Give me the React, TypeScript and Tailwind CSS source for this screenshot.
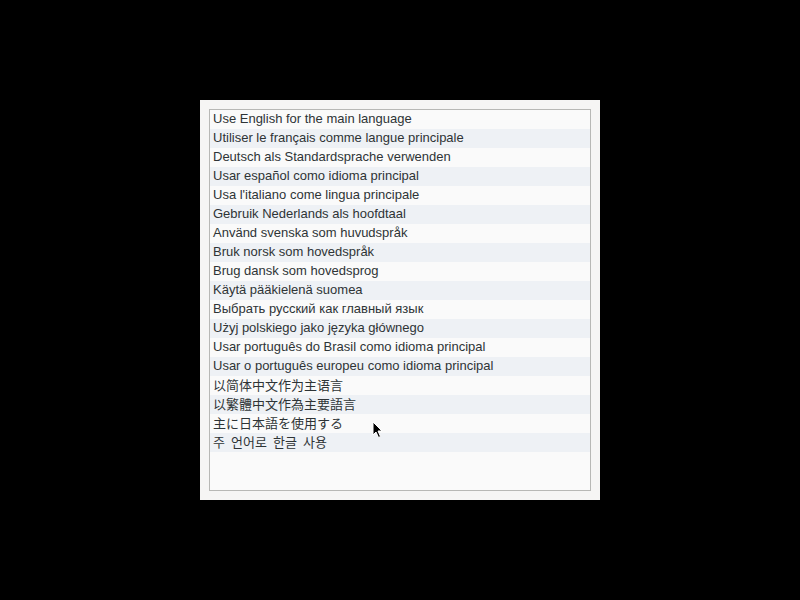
const ITEMS = [
  "Use English for the main language",
  "Utiliser le français comme langue principale",
  "Deutsch als Standardsprache verwenden",
  "Usar español como idioma principal",
  "Usa l'italiano come lingua principale",
  "Gebruik Nederlands als hoofdtaal",
  "Använd svenska som huvudspråk",
  "Bruk norsk som hovedspråk",
  "Brug dansk som hovedsprog",
  "Käytä pääkielenä suomea",
  "Выбрать русский как главный язык",
  "Użyj polskiego jako języka głównego",
  "Usar português do Brasil como idioma principal",
  "Usar o português europeu como idioma principal",
  "以简体中文作为主语言",
  "以繁體中文作為主要語言",
  "主に日本語を使用する",
  "주 언어로 한글 사용",
];

export default function App() {
  return (
    <div className="relative flex h-[600px] w-[800px] items-center justify-center bg-black">
      <div className="h-[400px] w-[400px] bg-[#f6f5f4] p-[9px]">
        <div
          className="h-full w-full border border-[#b8b8b5] bg-[#fafafa] text-[13px] text-[#2e3436]"
          style={{ fontFamily: '"Liberation Sans", Arial, "Noto Sans CJK SC", "Noto Sans CJK JP", "Noto Sans CJK KR", sans-serif' }}
        >
          {ITEMS.map((item, index) => (
            <div
              key={item}
              className={`flex h-[19px] items-center px-[3px] leading-none ${index >= 14 && index <= 16 ? "pb-0" : "pb-[2px]"} ${index % 2 === 1 ? "bg-[#eef1f5]" : "bg-[#fafafa]"}`}
            >
              {index === ITEMS.length - 1 ? (
                <span className="font-['Noto_Sans_CJK_KR',sans-serif] [word-spacing:3.2px]">{item}</span>
              ) : (
                item
              )}
            </div>
          ))}
        </div>
      </div>
      <svg className="absolute left-[372px] top-[421px]" width="12" height="18" viewBox="0 0 12 18">
        <path d="M1 1 L1 14 L4 11 L6.5 16.5 L8.5 15.5 L6 10 L10 10 Z" fill="#000" stroke="#fff" strokeWidth="1" />
      </svg>
    </div>
  );
}
